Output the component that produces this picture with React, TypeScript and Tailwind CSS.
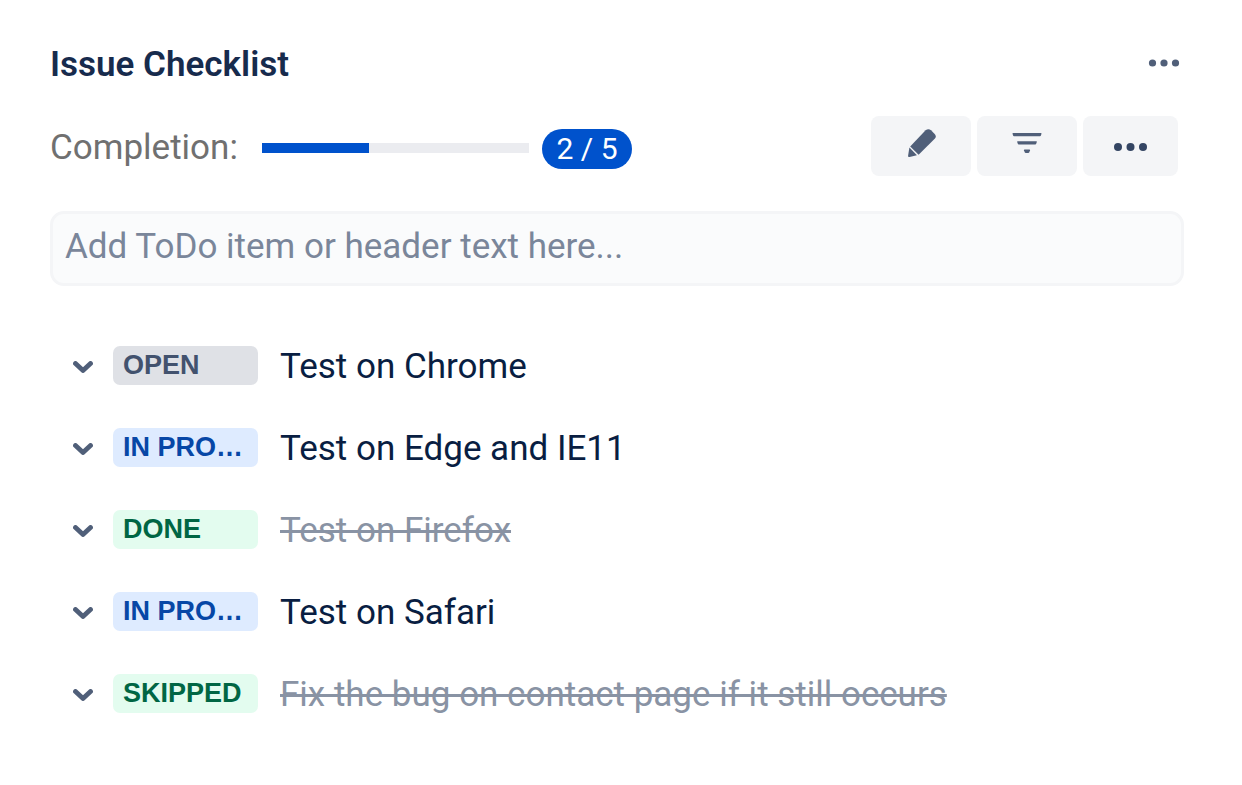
import { useState } from "react";

type Status = "OPEN" | "IN PROGRESS" | "DONE" | "SKIPPED";

type Item = {
  id: number;
  status: Status;
  text: string;
};

const items: Item[] = [
  { id: 1, status: "OPEN", text: "Test on Chrome" },
  { id: 2, status: "IN PROGRESS", text: "Test on Edge and IE11" },
  { id: 3, status: "DONE", text: "Test on Firefox" },
  { id: 4, status: "IN PROGRESS", text: "Test on Safari" },
  { id: 5, status: "SKIPPED", text: "Fix the bug on contact page if it still occurs" },
];

const statusStyles: Record<Status, string> = {
  OPEN: "bg-[#dfe1e6] text-[#42526e]",
  "IN PROGRESS": "bg-[#deebff] text-[#0747a6]",
  DONE: "bg-[#e3fcef] text-[#006644]",
  SKIPPED: "bg-[#e3fcef] text-[#006644]",
};

// long statuses are shortened so the label fits the fixed width tag
const statusLabels: Record<Status, string> = {
  OPEN: "OPEN",
  "IN PROGRESS": "IN PRO…",
  DONE: "DONE",
  SKIPPED: "SKIPPED",
};

const isCompleted = (item: Item) => item.status === "DONE" || item.status === "SKIPPED";

const ChevronIcon = () => (
  <svg className="h-3 w-5" viewBox="0 0 20 12" fill="none" aria-hidden="true">
    <path d="M2.5 2.5 10 9.5 17.5 2.5" stroke="#505f79" strokeWidth="4.8" strokeLinecap="round" strokeLinejoin="round" />
  </svg>
);

const PencilIcon = () => (
  <svg className="h-7 w-7" viewBox="0 0 28 28" fill="#505f79" aria-hidden="true">
    <path d="M17.6 1.3Q20.4-1 23 1.3L26.7 5Q28.9 7.4 26.7 9.8L10.6 25.8 2.2 17.4Z" />
    <path d="M1.4 18.5 8.9 26.2 1.6 28Q-.1 28.2.1 26.7Z" />
  </svg>
);

const FilterIcon = () => (
  <svg className="h-5 w-[30px]" viewBox="0 0 30 20" fill="#505f79" aria-hidden="true">
    <path d="M1 0H29Q29.7 0 29.5.8L28.9 2.6Q28.7 3.3 28 3.3H2Q1.3 3.3 1.1 2.6L.5.8Q.3 0 1 0Z" />
    <path d="M5.6 8.2H24.4Q25 8.2 24.8 9L24.2 10.8Q24 11.6 23.2 11.6H6.8Q6 11.6 5.8 10.8L5.2 9Q5 8.2 5.6 8.2Z" />
    <path d="M12.6 16.5H17.4Q18.2 16.5 18 17.3L17.3 19.2Q17 20 16.2 20H13.8Q13 20 12.7 19.2L12 17.3Q11.8 16.5 12.6 16.5Z" />
  </svg>
);

export default function App() {
  const [draft, setDraft] = useState("");
  const done = items.filter(isCompleted).length;

  return (
    <main className="min-h-screen bg-white pt-[41px] pr-[58px] pb-16 pl-[50px] font-['Roboto',sans-serif] text-[35px] leading-12">
      {/* HEADER */}
      <header className="flex items-center justify-between">
        <h1 className="font-semibold text-[#172b4d]">Issue Checklist</h1>
        <button type="button" aria-label="Panel actions" className="px-1 pb-1">
          <svg className="h-2 w-8" viewBox="0 0 32 8" fill="#505f79" aria-hidden="true">
            <circle cx="4.5" cy="4" r="3.6" />
            <circle cx="16" cy="4" r="3.6" />
            <circle cx="27.5" cy="4" r="3.6" />
          </svg>
        </button>
      </header>

      {/* COMPLETION */}
      <section className="mt-[27px] flex items-center justify-between pr-1.5">
        <div className="flex items-center">
          <span id="completion" className="w-[212px] pt-1 text-[#707070]">Completion:</span>
          <div
            role="progressbar"
            aria-labelledby="completion"
            aria-valuenow={done}
            aria-valuemax={items.length}
            className="mt-1 h-2.5 w-[267px] bg-[#ebecf0]"
          >
            <div className="h-full bg-[#0052cc]" style={{ width: `${(done / items.length) * 100}%` }} />
          </div>
          <span className="mt-1.5 ml-[13px] flex h-10 w-[90px] items-center justify-center rounded-full bg-[#0052cc] text-[30px] text-white">
            {done} / {items.length}
          </span>
        </div>
        <div className="flex gap-1.5">
          <button type="button" aria-label="Edit" className="flex h-[60px] w-[100px] items-center justify-center rounded-lg bg-[#f4f5f7] pb-1.5 pl-0.5">
            <PencilIcon />
          </button>
          <button type="button" aria-label="Filter" className="flex h-[60px] w-[100px] items-center justify-center rounded-lg bg-[#f4f5f7] pb-1.5">
            <FilterIcon />
          </button>
          <button type="button" aria-label="More" className="flex h-[60px] w-[95px] items-center justify-center rounded-lg bg-[#f4f5f7]">
            <svg className="mt-0.5 h-2 w-9" viewBox="0 0 36 8" fill="#344563" aria-hidden="true">
              <circle cx="5" cy="4" r="4" />
              <circle cx="17.5" cy="4" r="4" />
              <circle cx="30" cy="4" r="4" />
            </svg>
          </button>
        </div>
      </section>

      {/* NEW ITEM */}
      <input
        type="text"
        aria-label="Add item"
        value={draft}
        onChange={(e) => setDraft(e.target.value)}
        placeholder="Add ToDo item or header text here..."
        className="mt-[35px] block h-[75px] w-full rounded-[14px] border-3 border-[#f4f5f7] bg-[#fafbfc] px-3 pb-1 text-[#091e42] outline-none placeholder:text-[#7a869a]"
      />

      {/* ITEMS */}
      <ul className="mt-[57px] flex flex-col gap-[34px] pl-[23px]">
        {items.map((item) => (
          <li key={item.id} className="flex items-center">
            <button type="button" aria-label={`Expand ${item.text}`} className="mr-5">
              <ChevronIcon />
            </button>
            <button
              type="button"
              title={item.status}
              className={`mb-1 h-[39px] w-[145px] rounded-[7px] pl-2.5 text-left font-['Liberation_Sans',sans-serif] text-[27px] leading-[38px] font-bold whitespace-nowrap ${statusStyles[item.status]}`}
            >
              {statusLabels[item.status]}
            </button>
            <span className={`ml-[22px] ${isCompleted(item) ? "text-[#8993a4] line-through" : "text-[#091e42]"}`}>
              {item.text}
            </span>
          </li>
        ))}
      </ul>
    </main>
  );
}
